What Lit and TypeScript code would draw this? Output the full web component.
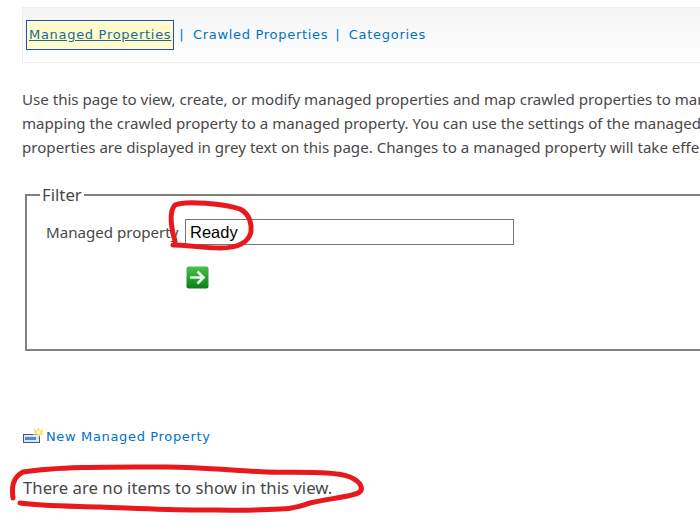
import { LitElement, html, css } from "lit";
import { customElement } from "lit/decorators.js";

@customElement("app-root")
export class AppRoot extends LitElement {
  static styles = css`
    :host { display: block; position: relative; width: 700px; height: 531px; overflow: hidden; background: #fff; font-family: "Noto Sans", "Open Sans", sans-serif; color: #484848; }
    .page { width: 900px; padding: 7px 0 0 22px; box-sizing: border-box; }
    .nav { height: 56px; box-sizing: border-box; border: 1px solid #eeeeee; border-right: 0; background: linear-gradient(#f4f4f4, #fefefe); display: flex; align-items: center; padding: 0 0 2px 3px; font-family: "DejaVu Sans", sans-serif; font-size: 13px; letter-spacing: 0.7px; color: #0072c6; }
    .nav a { color: #0072c6; text-decoration: none; }
    .nav a.active { display: block; height: 30px; line-height: 27px; box-sizing: border-box; padding: 0 2px; margin: 2px -2px 0 0; background: #fffbcc; border: 1px solid #1f4fb0; color: #1c6a94; text-decoration: underline; }
    .sep { margin: 0 8.5px 0 7px; }
    .intro { margin: 24px 0 0; font-size: 15.1px; line-height: 24px; white-space: nowrap; }
    fieldset { margin: 25px 0 0 3px; padding: 0 0 0 19px; height: 167px; box-sizing: border-box; border: 1px solid #808080; border-top-width: 2px; border-left-width: 2px; border-bottom-width: 2px; width: 900px; }
    legend { font-size: 16.75px; padding: 0 2px; margin-left: -6px; line-height: 22px; }
    .row { display: flex; align-items: center; margin-top: 13px; font-size: 15.1px; }
    .label { width: 139px; }
    .input { width: 329px; height: 26px; box-sizing: border-box; border: 1px solid #767676; font-family: "Liberation Sans", sans-serif; font-size: 16.5px; color: #000; padding-left: 4px; line-height: 24px; }
    .go { display: block; margin: 21px 0 0 140px; width: 23px; height: 23px; }
    .new { display: flex; align-items: center; margin-top: 73px; height: 24px; font-family: "DejaVu Sans", sans-serif; font-size: 13px; letter-spacing: 0.65px; }
    .new svg { display: block; }
    .new a { color: #0072c6; text-decoration: none; }
    .none { margin: 29px 0 0 1px; font-size: 16.75px; line-height: 22px; }
    .ink { position: absolute; left: 0; top: 0; pointer-events: none; }
    .ink path { fill: none; stroke: #e8191c; stroke-width: 5; stroke-linecap: round; stroke-linejoin: round; }
  `;

  render() {
    return html`
      <div class="page">
        <div class="nav">
          <a class="active" href="#">Managed Properties</a>
          <span class="sep">|</span><a href="#">Crawled Properties</a>
          <span class="sep">|</span><a href="#">Categories</a>
        </div>
        <p class="intro">
          Use this page to view, create, or modify managed properties and map crawled properties to managed properties. Crawled<br />
          mapping the crawled property to a managed property. You can use the settings of the managed property to restrict search<br />
          properties are displayed in grey text on this page. Changes to a managed property will take effect after the next full crawl.
        </p>
        <fieldset>
          <legend>Filter</legend>
          <div class="row"><span class="label">Managed property</span><div class="input">Ready</div></div>
          <svg class="go" viewBox="0 0 23 23">
            <defs><linearGradient id="g" x1="0" y1="0" x2="0" y2="1"><stop offset="0" stop-color="#4cc04c"/><stop offset="1" stop-color="#0b7f16"/></linearGradient></defs>
            <rect x="0.5" y="0.5" width="22" height="22" rx="2" fill="url(#g)"/>
            <path d="M4 11.5H17M11.5 5.5L17.5 11.5L11.5 17.5" fill="none" stroke="#eaffea" stroke-width="2.6"/>
          </svg>
        </fieldset>
        <div class="new">
          <svg width="24" height="18" viewBox="0 0 24 18">
            <rect x="1.5" y="7.5" width="16" height="8" fill="#dfe7f4" stroke="#4a5878"/>
            <rect x="3" y="10" width="11" height="3" fill="#4f8ae0"/>
            <path d="M16.5 0L18 3.5L21.5 2L20 5.5L22 8L18.5 7.5L16.5 11L14.5 7.5L11 8L13 5.5L11.5 2L15 3.5Z" fill="#f4e27a"/>
            <circle cx="16.5" cy="5.5" r="1.8" fill="#fff9c8"/>
          </svg>
          <a href="#">New Managed Property</a>
        </div>
        <div class="none">There are no items to show in this view.</div>
      </div>
      <svg class="ink" width="700" height="531">
        <path d="M175 241C172 232 168 212 175 205C185 200 225 204 240 209C250 214 252 225 251 232C248 244 235 248 220 248C205 248 185 245 173 245"/>
        <path d="M13 498C12 490 11 478 23 472C60 466 120 467 167 467C200 467 240 471 267 472C300 473 335 471 350 477C362 482 364 490 358 493C350 497 325 499 310 503C300 506 295 509 280 509C250 511 220 510 200 510C160 510 130 508 100 507C70 506 40 506 20 503"/>
      </svg>
    `;
  }
}
